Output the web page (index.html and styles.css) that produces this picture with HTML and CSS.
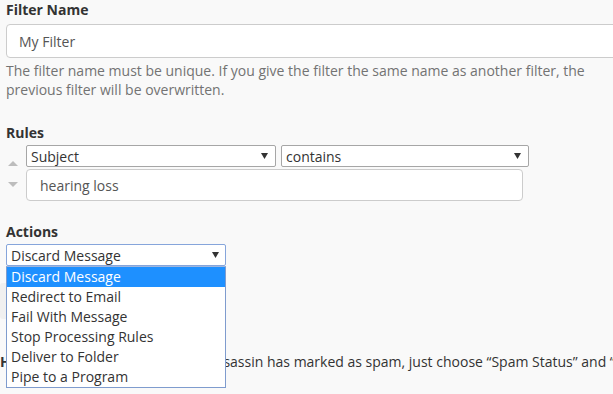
FILE: index.html
```html
<!DOCTYPE html>
<html>
<head>
<meta charset="utf-8">
<link rel="stylesheet" href="styles.css">
</head>
<body>
<div class="page">
  <div class="label">Filter Name</div>
  <div class="text-input name-input">My Filter</div>
  <p class="help">The filter name must be unique. If you give the filter the same name as another filter, the previous filter will be overwritten.</p>

  <div class="label rules-label">Rules</div>
  <div class="rule">
    <div class="movers">
      <svg class="mover" width="10" height="5" viewBox="0 0 10 5"><polygon points="0,5 10,5 5,0" fill="#bdbdbd"/></svg>
      <svg class="mover" width="10" height="5" viewBox="0 0 10 5"><polygon points="0,0 10,0 5,5" fill="#bdbdbd"/></svg>
    </div>
    <div class="rule-body">
      <div class="select-row">
        <div class="select w250"><span>Subject</span><svg width="7" height="6" viewBox="0 0 7 6"><polygon points="0,0 7,0 3.5,6" fill="#333"/></svg></div>
        <div class="select w248"><span>contains</span><svg width="7" height="6" viewBox="0 0 7 6"><polygon points="0,0 7,0 3.5,6" fill="#333"/></svg></div>
      </div>
      <div class="text-input rule-input">hearing loss</div>
    </div>
  </div>

  <div class="label actions-label">Actions</div>
  <div class="action-wrap">
    <div class="select focused w220"><span>Discard Message</span><svg width="7" height="6" viewBox="0 0 7 6"><polygon points="0,0 7,0 3.5,6" fill="#333"/></svg></div>
    <ul class="options">
      <li class="selected">Discard Message</li>
      <li>Redirect to Email</li>
      <li>Fail With Message</li>
      <li>Stop Processing Rules</li>
      <li>Deliver to Folder</li>
      <li>Pipe to a Program</li>
    </ul>
  </div>
  <div class="ghost-box"></div>
  <p class="hint"><b>Hint:</b> <span class="tight">To filter messages that Spam</span>Assassin has marked as spam, just choose “Spam Status” and “Begins With” for the rule.</p>
</div>
</body>
</html>
```
FILE: styles.css
```css
html, body {
  margin: 0;
  padding: 0;
  background: #f9f9f9;
}
body {
  font-family: "Open Sans", "Liberation Sans", sans-serif;
  font-size: 14px;
  color: #333;
  overflow: hidden;
  min-height: 394px;
}
.page {
  padding-left: 6px;
  width: 607px;
  min-height: 394px;
  position: relative;
  overflow: hidden;
}
.label {
  font-weight: bold;
  line-height: 20px;
  color: #333;
}
.text-input {
  box-sizing: border-box;
  background: #fff;
  border: 1px solid #cccccc;
  border-radius: 4px;
  color: #555;
  display: flex;
  align-items: center;
}
.name-input {
  margin-top: 4px;
  height: 34px;
  padding: 0 12px;
  width: 620px;
}
.help {
  margin: 4px 0 0;
  font-size: 14px;
  line-height: 18.5px;
  color: #737373;
  width: 600px;
}
.rules-label {
  margin-top: 24px;
}
.rule {
  display: flex;
  margin-top: 2px;
}
.movers {
  width: 20px;
  display: flex;
  flex-direction: column;
  padding-top: 16px;
  gap: 16px;
  box-sizing: border-box;
  padding-left: 2px;
}
.mover {
  display: block;
}
.rule-body {
  display: flex;
  flex-direction: column;
  gap: 2px;
}
.select-row {
  display: flex;
  gap: 5px;
}
.select {
  box-sizing: border-box;
  height: 22px;
  background: #fff;
  border: 1px solid #a6a6a6;
  border-radius: 2px;
  display: flex;
  align-items: center;
  justify-content: space-between;
  padding: 0 7px 0 4px;
  color: #333;
}
.select svg {
  margin-top: -1px;
}
.w250 { width: 250px; }
.w248 { width: 248px; }
.w220 { width: 220px; }
.focused {
  border-color: #86a5db;
  padding-right: 6px;
}
.rule-input {
  height: 32px;
  width: 497px;
  padding: 0 13px;
}
.actions-label {
  margin-top: 21px;
}
.action-wrap {
  position: relative;
  margin-top: 2px;
  width: 220px;
  z-index: 2;
}
.options {
  position: absolute;
  top: 22px;
  left: 0;
  margin: 0;
  padding: 0;
  list-style: none;
  width: 220px;
  box-sizing: border-box;
  border: 1px solid #7f9cce;
  border-top-color: #9fb6de;
  background: #fff;
  z-index: 2;
}
.options li {
  height: 20px;
  line-height: 20px;
  padding-left: 4px;
  color: #333;
}
.options li.selected {
  background: #1e90ff;
  color: #fff;
}
.ghost-box {
  margin: 17px 0 0 -6px;
  width: 200px;
  height: 36px;
  background: #f0f0f0;
  border-radius: 3px;
}
.hint {
  margin: 33px 0 0 -6px;
  line-height: 20px;
  white-space: nowrap;
  color: #333;
}
.hint b {
  font-weight: bold;
}
.tight {
  letter-spacing: -0.66px;
}
```
